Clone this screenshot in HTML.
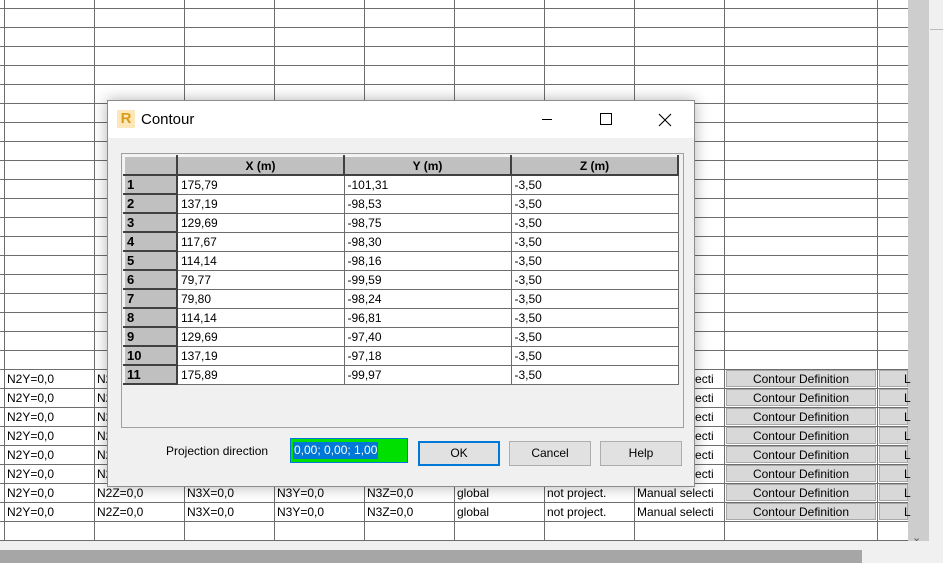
<!DOCTYPE html>
<html><head><style>
*{margin:0;padding:0;box-sizing:border-box}
body{width:943px;height:563px;overflow:hidden;background:#fff;font-family:"Liberation Sans",sans-serif;font-size:12px;position:relative}
.grid{position:absolute;left:0;top:0;width:908px;height:541px;
background-image:repeating-linear-gradient(to bottom,transparent 0,transparent 8px,#6d6d6d 8px,#6d6d6d 9px,transparent 9px,transparent 19px);}
.v{position:absolute;top:0;width:1px;height:541px;background:#6d6d6d}
.c{position:absolute;height:19px;line-height:20px;white-space:nowrap;overflow:hidden;color:#000}
.btn{position:absolute;height:17px;background:#d8d8d8;border:1px solid #a8a8a8;text-align:center;line-height:16px;font-size:12px}
.dlg{position:absolute;left:107px;top:100px;width:588px;height:387px;background:#f0f0f0;border:1px solid #8c8c8c;box-shadow:0 0 14px rgba(0,0,0,.3)}
.tb{position:absolute;left:0;top:0;width:586px;height:37px;background:#fff}
.tab{position:absolute;left:13px;top:52px;width:563px;height:275px;border:1px solid #a0a0a0;background:#f0f0f0}
table{border-collapse:collapse;position:absolute;left:1px;top:1px;font-size:12px}
td{border:1px solid #6d6d6d;height:19px;padding:0 3px;background:#fff}
th{border:1px solid #6d6d6d;height:19px;background:#c0c0c0;font-weight:bold;border-top:2px solid #f4f4f4;border-left:2px solid #f4f4f4;border-right:2px solid #404040;border-bottom:2px solid #404040}
td.h{background:#c0c0c0;font-weight:bold;border-top:2px solid #f4f4f4;border-left:2px solid #f4f4f4;border-right:2px solid #404040;border-bottom:2px solid #404040;padding:0 2px;font-size:13px}
.b2{position:absolute;top:340px;width:82px;height:25px;border:1px solid #adadad;background:#e1e1e1;text-align:center;line-height:23px}
</style></head><body>
<div class="grid"></div>
<div class="v" style="left:4px"></div><div class="v" style="left:94px"></div><div class="v" style="left:184px"></div><div class="v" style="left:274px"></div><div class="v" style="left:364px"></div><div class="v" style="left:454px"></div><div class="v" style="left:544px"></div><div class="v" style="left:634px"></div><div class="v" style="left:724px"></div><div class="v" style="left:877px"></div>
<div style="position:absolute;left:908px;top:0;width:21px;height:541px;background:#cdcdcd"></div>
<div style="position:absolute;left:929px;top:0;width:14px;height:563px;background:#f0f0f0"></div>
<div style="position:absolute;left:930px;top:0;width:13px;height:30px;border-bottom:1px solid #bbb;background:#f0f0f0"></div>
<div style="position:absolute;left:912px;top:531px;font-size:11px;color:#555">&#8964;</div>
<div style="position:absolute;left:0;top:541px;width:929px;height:9px;background:#f0f0f0"></div>
<div style="position:absolute;left:0;top:550px;width:862px;height:13px;background:#a6a6a6"></div>
<div style="position:absolute;left:862px;top:550px;width:67px;height:13px;background:#f0f0f0"></div>

<div id="rows"></div>
<script>
var h='';var cols=[7,97,187,277,367,457,547,637];
var t=['N2Y=0,0','N2Z=0,0','N3X=0,0','N3Y=0,0','N3Z=0,0','global','not project.','Manual selecti'];
for(var r=0;r<8;r++){var y=369+r*19;
for(var i=0;i<8;i++){h+='<div class="c" style="left:'+cols[i]+'px;top:'+y+'px;width:86px">'+t[i]+'</div>';}
h+='<div class="btn" style="left:726px;top:'+(y+1)+'px;width:150px">Contour Definition</div>';
h+='<div class="btn" style="left:879px;top:'+(y+1)+'px;width:29px;text-align:left;padding-left:24px">L</div>';}
document.getElementById('rows').innerHTML=h;
</script>

<div class="dlg">
<div class="tb">
<div style="position:absolute;left:9px;top:9px;width:18px;height:18px;background:#fde7b8;color:#d99a1a;font-weight:bold;font-size:15px;line-height:18px;text-align:center">R</div>
<div style="position:absolute;left:33px;top:10px;font-size:15px">Contour</div>
<div style="position:absolute;left:434px;top:18px;width:10px;height:1px;background:#000"></div>
<div style="position:absolute;left:492px;top:12px;width:12px;height:12px;border:1px solid #000"></div>
<svg style="position:absolute;left:550px;top:12px" width="14" height="14"><path d="M1 1L13 13M13 1L1 13" stroke="#000" stroke-width="1.1"/></svg>
</div>
<div class="tab">
<table>
<tr><th style="width:53px"></th><th style="width:167px">X (m)</th><th style="width:167px">Y (m)</th><th style="width:167px">Z (m)</th></tr>
<tr><td class="h">1</td><td>175,79</td><td>-101,31</td><td>-3,50</td></tr>
<tr><td class="h">2</td><td>137,19</td><td>-98,53</td><td>-3,50</td></tr>
<tr><td class="h">3</td><td>129,69</td><td>-98,75</td><td>-3,50</td></tr>
<tr><td class="h">4</td><td>117,67</td><td>-98,30</td><td>-3,50</td></tr>
<tr><td class="h">5</td><td>114,14</td><td>-98,16</td><td>-3,50</td></tr>
<tr><td class="h">6</td><td>79,77</td><td>-99,59</td><td>-3,50</td></tr>
<tr><td class="h">7</td><td>79,80</td><td>-98,24</td><td>-3,50</td></tr>
<tr><td class="h">8</td><td>114,14</td><td>-96,81</td><td>-3,50</td></tr>
<tr><td class="h">9</td><td>129,69</td><td>-97,40</td><td>-3,50</td></tr>
<tr><td class="h">10</td><td>137,19</td><td>-97,18</td><td>-3,50</td></tr>
<tr><td class="h">11</td><td>175,89</td><td>-99,97</td><td>-3,50</td></tr>
</table>
</div>
<div style="position:absolute;left:58px;top:343px">Projection direction</div>
<div style="position:absolute;left:182px;top:337px;width:118px;height:25px;border:1px solid #0078d7;background:#00e000;padding:3px 2px"><span style="background:#0078d7;color:#fff;display:inline-block;height:17px;line-height:17px;padding:0 1px">0,00; 0,00; 1,00</span></div>
<div class="b2" style="left:310px;border:2px solid #0078d7;line-height:21px">OK</div>
<div class="b2" style="left:401px">Cancel</div>
<div class="b2" style="left:492px">Help</div>
</div>
</body></html>
